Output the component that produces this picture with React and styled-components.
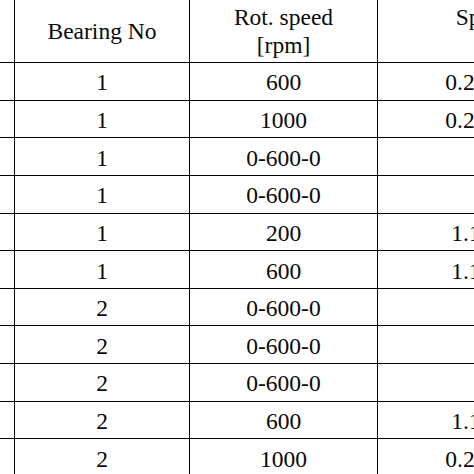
import React from 'react';
import styled, { createGlobalStyle } from 'styled-components';

const GlobalStyle = createGlobalStyle`
	html, body {
		margin: 0;
		padding: 0;
		background: #fff;
		overflow: hidden;
	}
	body {
		width: 474px;
		height: 474px;
	}
`;

const rows = [
	{ bearing: 1, speed: '600', variation: '0.2-0.25' },
	{ bearing: 1, speed: '1000', variation: '0.2-0.25' },
	{ bearing: 1, speed: '0-600-0', variation: '' },
	{ bearing: 1, speed: '0-600-0', variation: '' },
	{ bearing: 1, speed: '200', variation: '1.1-1.5' },
	{ bearing: 1, speed: '600', variation: '1.1-1.5' },
	{ bearing: 2, speed: '0-600-0', variation: '' },
	{ bearing: 2, speed: '0-600-0', variation: '' },
	{ bearing: 2, speed: '0-600-0', variation: '' },
	{ bearing: 2, speed: '600', variation: '1.1-1.5' },
	{ bearing: 2, speed: '1000', variation: '0.2-0.25' },
];

const App = () => {
	return (
		<>
			<GlobalStyle />
			<TableGrid>
				<HeadCell />
				<HeadCell>Bearing No</HeadCell>
				<HeadCell>
					Rot. speed
					<br />
					[rpm]
				</HeadCell>
				<HeadCell>
					Speed
					<br />
					[-]
				</HeadCell>
				{rows.map((row, i) => (
					<React.Fragment key={i}>
						<Cell />
						<Cell>{row.bearing}</Cell>
						<Cell>{row.speed}</Cell>
						<Cell>{row.variation}</Cell>
					</React.Fragment>
				))}
			</TableGrid>
		</>
	);
};

const TableGrid = styled.div`
	display: grid;
	grid-template-columns: 15px 175px 188px 214px;
	grid-template-rows: 63px;
	grid-auto-rows: 37.65px;
	width: max-content;
	font-family: 'Liberation Serif', 'Times New Roman', serif;
	font-size: 23.5px;
	color: #0a0a0a;
`;

const Cell = styled.div`
	display: flex;
	align-items: center;
	justify-content: center;
	box-sizing: border-box;
	padding-top: 3px;
	border-right: 1px solid #000;
	border-bottom: 1px solid #000;
	white-space: nowrap;
`;

const HeadCell = styled(Cell)`
	text-align: center;
	line-height: 28px;
	padding-top: 0;
	white-space: normal;
`;

export default App;
